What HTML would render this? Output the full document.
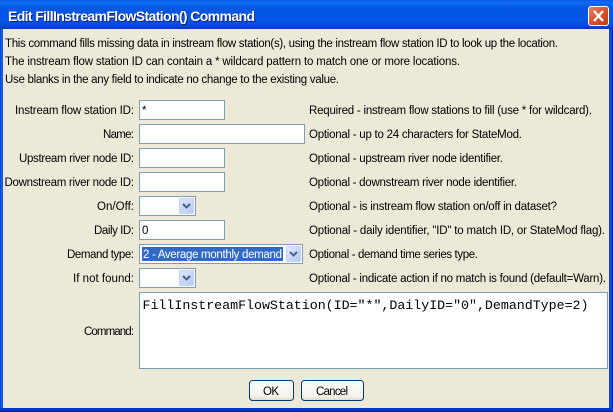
<!DOCTYPE html>
<html><head><meta charset="utf-8"><style>
html,body{margin:0;padding:0;width:613px;height:412px;overflow:hidden;background:#ece9d8}
svg{display:block}
text{font-family:"Liberation Sans",sans-serif;font-size:11.5px;fill:#000}
.box{fill:#fff;stroke:#7f9db9;stroke-width:1}
</style></head><body>
<svg width="613" height="412" viewBox="0 0 613 412" xmlns="http://www.w3.org/2000/svg">
<defs>
<linearGradient id="tb" x1="0" y1="0" x2="0" y2="1">
<stop offset="0" stop-color="#0a5be0"/><stop offset=".1" stop-color="#0d6cf5"/><stop offset=".25" stop-color="#0458e2"/><stop offset=".7" stop-color="#0355e8"/><stop offset=".9" stop-color="#0348d0"/><stop offset="1" stop-color="#013cb0"/>
</linearGradient>
<linearGradient id="cl" x1="0" y1="0" x2="1" y2="1"><stop offset="0" stop-color="#e58a6c"/><stop offset=".5" stop-color="#d9512a"/><stop offset="1" stop-color="#c23a12"/></linearGradient>
<linearGradient id="ar" x1="0" y1="0" x2="1" y2="1"><stop offset="0" stop-color="#dfe8fd"/><stop offset="1" stop-color="#b4c7f5"/></linearGradient>
<linearGradient id="bt" x1="0" y1="0" x2="0" y2="1"><stop offset="0" stop-color="#fff"/><stop offset=".8" stop-color="#f3f2ea"/><stop offset="1" stop-color="#dcd8c8"/></linearGradient>
</defs>
<rect width="613" height="412" fill="#0348d8"/>
<rect x="0" y="0" width="613" height="29" fill="url(#tb)"/>
<rect x="0" y="29" width="1" height="383" fill="#0a4ad0"/>
<rect x="1" y="29" width="2" height="379" fill="#0a5cf5"/>
<rect x="609" y="29" width="3" height="379" fill="#0348d0"/>
<rect x="612" y="29" width="1" height="383" fill="#01259a"/>
<rect x="0" y="408" width="613" height="3" fill="#0236c4"/>
<rect x="0" y="411" width="613" height="1" fill="#011f8c"/>
<rect x="3" y="29" width="606" height="379" fill="#ece9d8"/>

<text x="8" y="21" textLength="247" style="font-size:14px;font-weight:bold;fill:#0a1f7a" transform="translate(1 1)">Edit FillInstreamFlowStation() Command</text>
<text x="8" y="21" textLength="247" style="font-size:14px;font-weight:bold;fill:#fff">Edit FillInstreamFlowStation() Command</text>

<rect x="588.5" y="6.5" width="20" height="19" rx="2.5" fill="url(#cl)" stroke="#fff"/>
<path d="M594 11L603 21M603 11L594 21" stroke="#fff" stroke-width="2.4" fill="none"/>

<text x="5" y="47" textLength="553">This command fills missing data in instream flow station(s), using the instream flow station ID to look up the location.</text>
<text x="5" y="65" textLength="455">The instream flow station ID can contain a * wildcard pattern to match one or more locations.</text>
<text x="5" y="83" textLength="334">Use blanks in the any field to indicate no change to the existing value.</text>

<text x="15" y="114" textLength="119">Instream flow station ID:</text>
<text x="103" y="138" textLength="31">Name:</text>
<text x="19" y="162" textLength="115">Upstream river node ID:</text>
<text x="4.5" y="186" textLength="129.500">Downstream river node ID:</text>
<text x="97" y="210" textLength="37">On/Off:</text>
<text x="94" y="234" textLength="40">Daily ID:</text>
<text x="67" y="258" textLength="67">Demand type:</text>
<text x="73" y="282" textLength="61">If not found:</text>
<text x="84" y="335" textLength="50">Command:</text>

<rect class="box" x="139.5" y="100.5" width="85" height="19"/>
<text x="142" y="114">*</text>
<rect class="box" x="139.5" y="124.5" width="165" height="19"/>
<rect class="box" x="139.5" y="148.5" width="85" height="19"/>
<rect class="box" x="139.5" y="172.5" width="85" height="19"/>

<rect class="box" x="139.5" y="196.5" width="56" height="19"/>
<rect x="179.5" y="198.5" width="14" height="15" rx="1.5" fill="url(#ar)" stroke="#c3d3f8"/>
<path d="M183 204L186.500 207.500L190 204" stroke="#4d6185" stroke-width="2" fill="none"/>

<rect class="box" x="139.5" y="220.500" width="85" height="19"/>
<text x="142" y="234">0</text>

<rect class="box" x="139.500" y="244.500" width="163" height="19"/>
<rect x="142" y="247" width="141" height="14" fill="#316ac5"/>
<text x="143" y="258" textLength="139" style="fill:#fff">2 - Average monthly demand</text>
<rect x="286.500" y="246.500" width="14" height="15" rx="1.500" fill="url(#ar)" stroke="#c3d3f8"/>
<path d="M290 252L293.500 255.500L297 252" stroke="#4d6185" stroke-width="2" fill="none"/>

<rect class="box" x="139.500" y="268.500" width="56" height="19"/>
<rect x="179.500" y="270.500" width="14" height="15" rx="1.500" fill="url(#ar)" stroke="#c3d3f8"/>
<path d="M183 276L186.500 279.500L190 276" stroke="#4d6185" stroke-width="2" fill="none"/>

<rect class="box" x="139.500" y="292.500" width="468" height="76"/>
<text x="142.500" y="309" textLength="446" style="font-family:'Liberation Mono',monospace;font-size:13.33px">FillInstreamFlowStation(ID="*",DailyID="0",DemandType=2)</text>

<text x="309" y="114" textLength="283">Required - instream flow stations to fill (use * for wildcard).</text>
<text x="309" y="138" textLength="213">Optional - up to 24 characters for StateMod.</text>
<text x="309" y="162" textLength="194">Optional - upstream river node identifier.</text>
<text x="309" y="186" textLength="208">Optional - downstream river node identifier.</text>
<text x="309" y="210" textLength="248">Optional - is instream flow station on/off in dataset?</text>
<text x="309" y="234" textLength="296">Optional - daily identifier, "ID" to match ID, or StateMod flag).</text>
<text x="309" y="258" textLength="169">Optional - demand time series type.</text>
<text x="309" y="282" textLength="297">Optional - indicate action if no match is found (default=Warn).</text>

<rect x="249.500" y="380.500" width="44" height="20" rx="3" fill="url(#bt)" stroke="#003c74"/>
<text x="263" y="395" textLength="16">OK</text>
<rect x="301.500" y="380.500" width="62" height="20" rx="3" fill="url(#bt)" stroke="#003c74"/>
<text x="316" y="395" textLength="32">Cancel</text>
</svg>
</body></html>
